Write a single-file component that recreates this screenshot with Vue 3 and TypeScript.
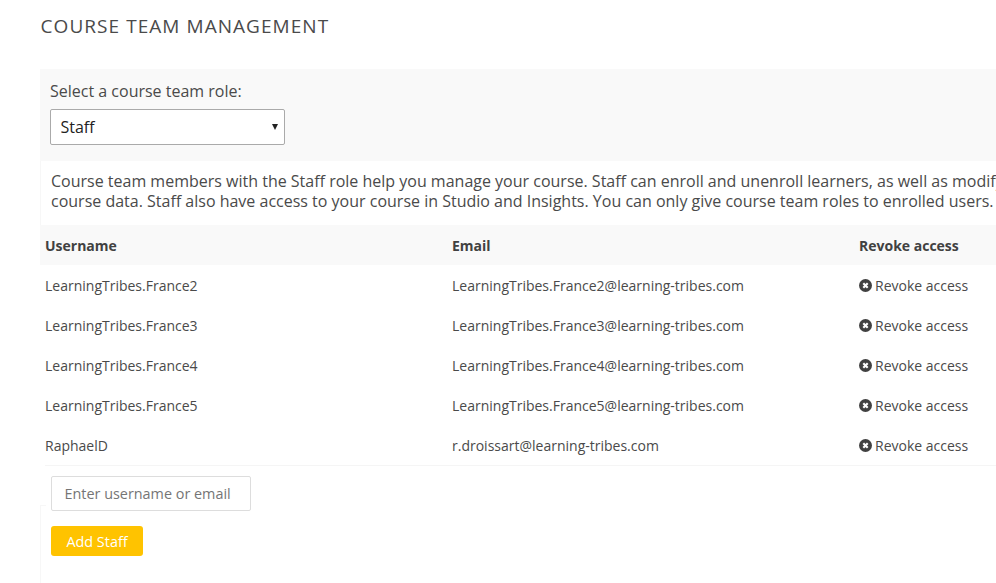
<script setup lang="ts">
interface Member { username: string; email: string }
const members: Member[] = [
  { username: 'LearningTribes.France2', email: 'LearningTribes.France2@learning-tribes.com' },
  { username: 'LearningTribes.France3', email: 'LearningTribes.France3@learning-tribes.com' },
  { username: 'LearningTribes.France4', email: 'LearningTribes.France4@learning-tribes.com' },
  { username: 'LearningTribes.France5', email: 'LearningTribes.France5@learning-tribes.com' },
  { username: 'RaphaelD', email: 'r.droissart@learning-tribes.com' },
]
</script>

<template>
  <div class="page">
    <h2 class="title">COURSE TEAM MANAGEMENT</h2>
    <div class="body">
      <div class="role-panel">
        <label class="role-label" for="role">Select a course team role:</label>
        <div class="select-wrap">
          <select id="role" class="role-select">
            <option>Staff</option>
          </select>
        </div>
      </div>
      <p class="desc">Course team members with the Staff role help you manage your course. Staff can enroll and unenroll learners, as well as modify their grading policy and other<br />course data. Staff also have access to your course in Studio and Insights. You can only give course team roles to enrolled users.</p>
      <div class="table">
        <div class="row head">
          <div class="c1">Username</div>
          <div class="c2">Email</div>
          <div class="c3">Revoke access</div>
        </div>
        <div v-for="m in members" :key="m.username" class="row">
          <div class="c1">{{ m.username }}</div>
          <div class="c2">{{ m.email }}</div>
          <div class="c3 revoke">
            <svg class="icon" viewBox="0 0 13 13" aria-hidden="true">
              <circle cx="6.5" cy="6.5" r="6.5" fill="#414141" />
              <path d="M4.3 4.3l4.4 4.4M8.7 4.3l-4.4 4.4" stroke="#fff" stroke-width="2.1" fill="none" />
            </svg>
            <span>Revoke access</span>
          </div>
        </div>
      </div>
      <div class="add">
        <input class="add-input" placeholder="Enter username or email" />
        <button class="add-btn">Add Staff</button>
      </div>
    </div>
  </div>
</template>

<style>
html, body { margin: 0; background: #fff; overflow: hidden; }
</style>

<style scoped>
.page {
  width: 996px;
  height: 583px;
  overflow: hidden;
  font-family: "Open Sans", sans-serif;
  color: #4a4a4a;
  box-sizing: border-box;
  padding: 15px 0 0 40px;
}
.title {
  margin: 0 0 32px 0.6px;
  font-size: 19px;
  font-weight: 400;
  line-height: 22px;
  letter-spacing: 1.05px;
  color: #4a4a4a;
}
.body { width: 1200px; }
.role-panel {
  background: #f9f9f9;
  height: 92px;
  box-sizing: border-box;
  padding: 12px 10px 0;
  display: flex;
  flex-direction: column;
  align-items: flex-start;
}
.role-label { font-size: 16px; line-height: 20px; margin-bottom: 8px; }
.select-wrap { position: relative; width: 235px; height: 36px; }
.select-wrap::after {
  content: "";
  position: absolute;
  left: 222px;
  top: 15px;
  border-left: 3.5px solid transparent;
  border-right: 3.5px solid transparent;
  border-top: 6px solid #222;
  pointer-events: none;
}
.role-select {
  appearance: none;
  width: 235px;
  height: 36px;
  box-sizing: border-box;
  border: 1px solid #aaa;
  border-radius: 2px;
  background: #fff;
  font-family: "Open Sans", sans-serif;
  font-size: 16px;
  color: #222;
  padding: 0 9.5px;
}
.desc {
  margin: 0;
  padding: 10px 0 0 10px;
  height: 64px;
  box-sizing: border-box;
  border-left: 1px solid #f7f7f7;
  font-size: 16px;
  line-height: 20px;
  white-space: nowrap;
}
.row {
  display: flex;
  height: 40px;
  align-items: center;
  font-size: 14px;
}
.head { background: #f9f9f9; font-weight: 700; color: #414141; }
.c1, .c2 { width: 407px; padding-left: 5px; box-sizing: border-box; }
.c3 { padding-left: 5px; }
.revoke { display: flex; align-items: center; gap: 3px; }
.icon { width: 13px; height: 13px; flex: none; }
.add {
  position: relative;
  margin-left: 5px;
  border-top: 1px solid #f5f5f5;
  display: flex;
  flex-direction: column;
  align-items: flex-start;
  padding: 10px 6px 27px;
  gap: 15px;
}
.add::before {
  content: "";
  position: absolute;
  left: -5px;
  top: 39px;
  bottom: 0;
  width: 5px;
  border-left: 1px solid #f7f7f7;
  border-top: 1px solid #f7f7f7;
}
.add-input {
  width: 200px;
  height: 35px;
  box-sizing: border-box;
  border: 1px solid #ddd;
  border-radius: 2px;
  padding: 0 12.5px;
  font-family: "Open Sans", sans-serif;
  font-size: 14.4px;
  background: #fff;
  outline: none;
}
.add-input::placeholder { color: #757575; opacity: 1; }
.add-btn {
  width: 92px;
  height: 30px;
  box-sizing: border-box;
  border: 0;
  border-radius: 3px;
  background: #ffc300;
  color: #fff;
  font-family: "Open Sans", sans-serif;
  font-size: 14.4px;
  padding: 0;
}
</style>
